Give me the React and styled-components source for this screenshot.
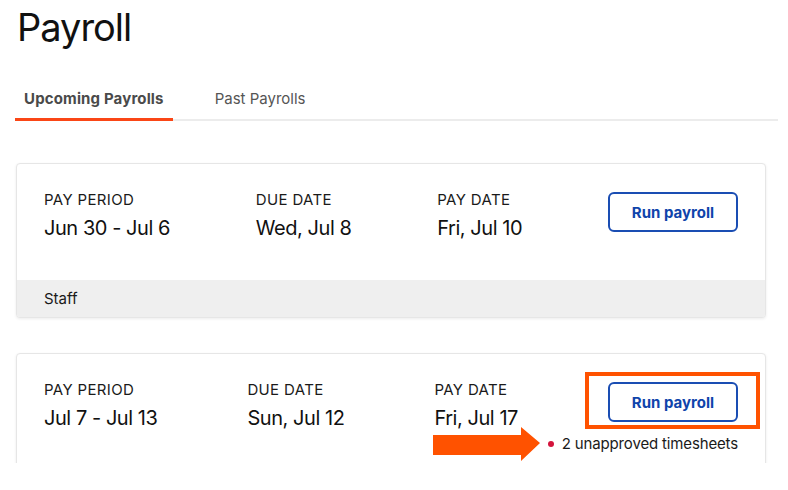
import React from "react";
import styled, { createGlobalStyle } from "styled-components";

const GlobalStyle = createGlobalStyle`
  body {
    margin: 0;
    background: #ffffff;
    color: #1a1a1a;
    font-family: Inter, "Liberation Sans", Arial, sans-serif;
  }
`;

const Page = styled.div`
  height: 463px;
  padding: 0 10px 0 15px;
  overflow: hidden;
`;

const Title = styled.h1`
  margin: 4px 0 0 2px;
  font-size: 38px;
  font-weight: 400;
  line-height: 46px;
  letter-spacing: -1px;
  color: #111;
`;

const TabList = styled.div`
  display: flex;
  gap: 33px;
  margin-top: 39px;
  border-bottom: 2px solid #ececec;
`;

const Tab = styled.div`
  padding: 0 9px 9px;
  margin-bottom: -2px;
  font-size: 15px;
  line-height: 20px;
  font-weight: ${(p) => (p.active ? 700 : 400)};
  letter-spacing: ${(p) => (p.active ? "0.15px" : "0")};
  color: ${(p) => (p.active ? "#4a4a4a" : "#555")};
  border-bottom: 3px solid ${(p) => (p.active ? "#fa4616" : "transparent")};
`;

const CardList = styled.div`
  display: flex;
  flex-direction: column;
  gap: 35px;
  margin: 42px 12px 0 1px;
`;

const Card = styled.div`
  background: #fff;
  border: 1px solid #e6e6e6;
  border-radius: 4px;
  box-shadow: 0 1px 3px rgba(0, 0, 0, 0.08);
  overflow: hidden;
`;

const CardBody = styled.div`
  padding: 28px 27px 39px 27px;
`;

const Row = styled.div`
  display: flex;
  justify-content: space-between;
  align-items: flex-start;
`;

const Field = styled.div`
  display: flex;
  flex-direction: column;
`;

const Label = styled.div`
  font-size: 15px;
  line-height: 16px;
  letter-spacing: 0.35px;
  text-transform: uppercase;
  margin-bottom: 7px;
  color: #1a1a1a;
`;

const Value = styled.div`
  font-size: 20px;
  line-height: 26px;
  letter-spacing: -0.45px;
  color: #111;
`;

const ButtonWrap = styled.div`
  position: relative;
`;

const Highlight = styled.span`
  position: absolute;
  top: -10px;
  left: -23px;
  right: -22px;
  bottom: -7px;
  border: 4px solid #ff5200;
  pointer-events: none;
`;

const RunButton = styled.button`
  width: 130px;
  height: 40px;
  border: 2px solid #1a4db3;
  border-radius: 6px;
  background: #fff;
  color: #0f44ab;
  font-family: inherit;
  font-size: 15px;
  font-weight: 700;
  cursor: pointer;
`;

const Footer = styled.div`
  height: 37px;
  padding: 0 27px;
  background: #efefef;
  font-size: 15px;
  line-height: 37px;
`;

const Note = styled.div`
  display: flex;
  justify-content: flex-end;
  align-items: center;
  margin-top: 3px;
  font-size: 15px;
  line-height: 20px;
  letter-spacing: -0.15px;
`;

const Arrow = styled.svg`
  margin: -8px 7px -8px 0;
  flex: none;
`;

const Dot = styled.span`
  width: 6px;
  height: 6px;
  border-radius: 50%;
  background: #d4143c;
  margin-right: 8px;
`;

const payrolls = [
  {
    period: "Jun 30 - Jul 6",
    due: "Wed, Jul 8",
    pay: "Fri, Jul 10",
    footer: "Staff",
  },
  {
    period: "Jul 7 - Jul 13",
    due: "Sun, Jul 12",
    pay: "Fri, Jul 17",
    highlighted: true,
    unapproved: 2,
  },
];

function PayrollCard({ p }) {
  return (
    <Card>
      <CardBody>
        <Row>
          <Field>
            <Label>Pay Period</Label>
            <Value>{p.period}</Value>
          </Field>
          <Field>
            <Label>Due Date</Label>
            <Value>{p.due}</Value>
          </Field>
          <Field>
            <Label>Pay Date</Label>
            <Value>{p.pay}</Value>
          </Field>
          <ButtonWrap>
            <RunButton>Run payroll</RunButton>
            {p.highlighted && <Highlight />}
          </ButtonWrap>
        </Row>
        {p.unapproved && (
          <Note>
            <Arrow width="108" height="34" viewBox="0 0 108 34">
              <path d="M0 8 H88 V0 L107 16 L88 34 V28 H0 Z" fill="#ff5200" />
            </Arrow>
            <Dot />
            {p.unapproved} unapproved timesheets
          </Note>
        )}
      </CardBody>
      {p.footer && <Footer>{p.footer}</Footer>}
    </Card>
  );
}

export default function App() {
  return (
    <Page>
      <GlobalStyle />
      <Title>Payroll</Title>
      <TabList>
        <Tab active>Upcoming Payrolls</Tab>
        <Tab>Past Payrolls</Tab>
      </TabList>
      <CardList>
        {payrolls.map((p) => (
          <PayrollCard key={p.period} p={p} />
        ))}
      </CardList>
    </Page>
  );
}
